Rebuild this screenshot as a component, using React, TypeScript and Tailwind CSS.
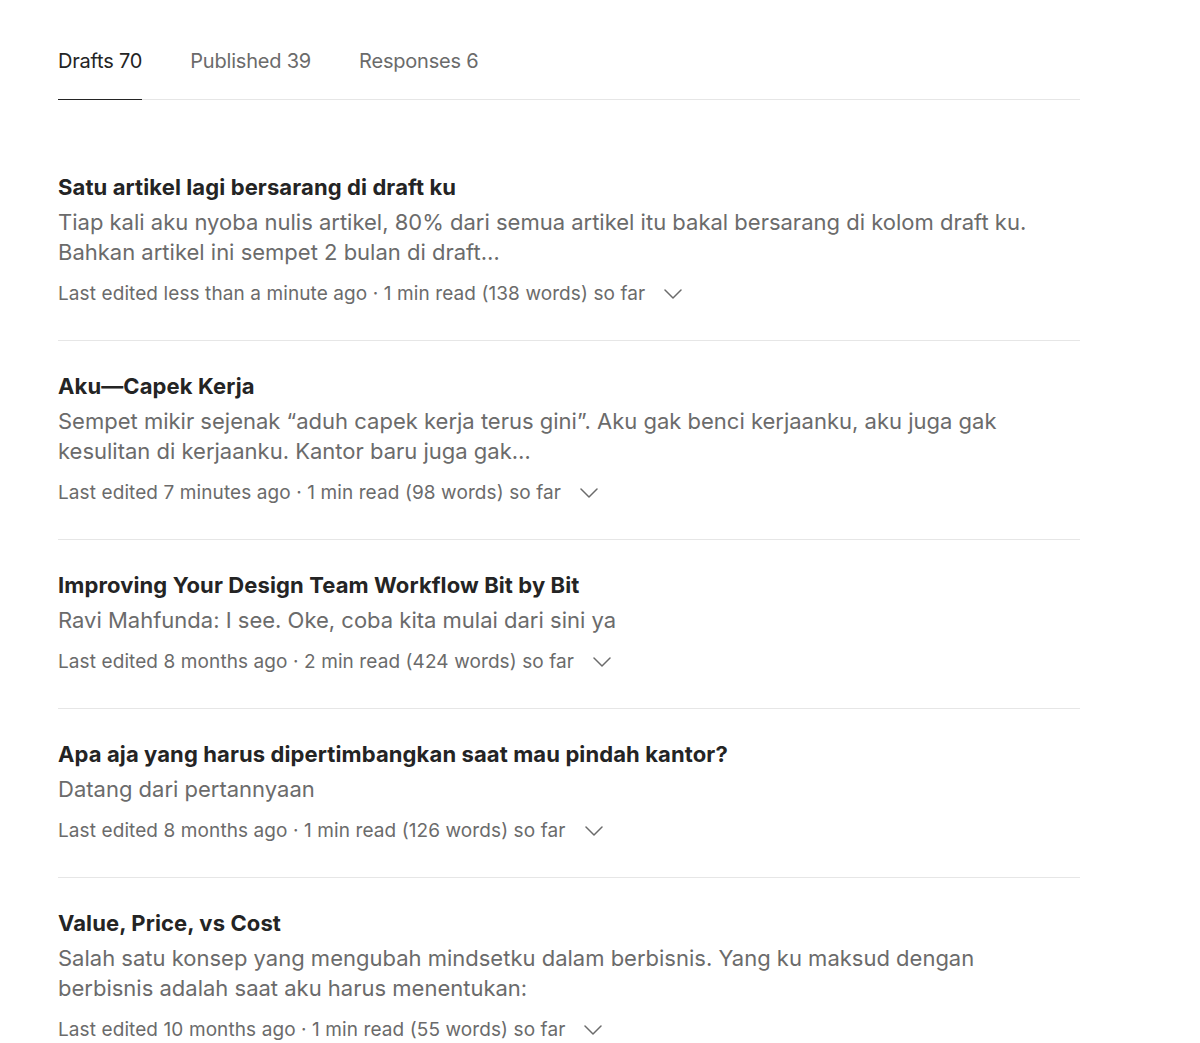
type Draft = {
  title: string;
  excerpt: string;
  edited: string;
  read: string;
};

const drafts: Draft[] = [
  {
    title: "Satu artikel lagi bersarang di draft ku",
    excerpt:
      "Tiap kali aku nyoba nulis artikel, 80% dari semua artikel itu bakal bersarang di kolom draft ku. Bahkan artikel ini sempet 2 bulan di draft…",
    edited: "less than a minute ago",
    read: "1 min read (138 words) so far",
  },
  {
    title: "Aku—Capek Kerja",
    excerpt:
      "Sempet mikir sejenak “aduh capek kerja terus gini”. Aku gak benci kerjaanku, aku juga gak kesulitan di kerjaanku. Kantor baru juga gak…",
    edited: "7 minutes ago",
    read: "1 min read (98 words) so far",
  },
  {
    title: "Improving Your Design Team Workflow Bit by Bit",
    excerpt: "Ravi Mahfunda: I see. Oke, coba kita mulai dari sini ya",
    edited: "8 months ago",
    read: "2 min read (424 words) so far",
  },
  {
    title: "Apa aja yang harus dipertimbangkan saat mau pindah kantor?",
    excerpt: "Datang dari pertannyaan",
    edited: "8 months ago",
    read: "1 min read (126 words) so far",
  },
  {
    title: "Value, Price, vs Cost",
    excerpt:
      "Salah satu konsep yang mengubah mindsetku dalam berbisnis. Yang ku maksud dengan berbisnis adalah saat aku harus menentukan:",
    edited: "10 months ago",
    read: "1 min read (55 words) so far",
  },
];

const tabs = [
  { label: "Drafts 70", active: true },
  { label: "Published 39", active: false },
  { label: "Responses 6", active: false },
];

function Chevron() {
  return (
    <svg width="18" height="10" viewBox="0 0 18 10" fill="none" className="ml-[19px] shrink-0">
      <path d="M1 1l8 8 8-8" stroke="#6b6b6b" strokeWidth="1.5" strokeLinecap="round" strokeLinejoin="round" />
    </svg>
  );
}

function DraftItem({ draft, first }: { draft: Draft; first: boolean }) {
  return (
    <article className={first ? "pt-[31px] pb-[34px]" : "border-t border-[#e6e6e6] pt-[31px] pb-[34px]"}>
      <h2 className="text-[22px] leading-[28px] font-bold tracking-[0.005em] text-[#242424]">
        {draft.title}
      </h2>
      <p className="mt-[6px] max-w-[990px] text-[22px] leading-[30px] text-[#6b6b6b]">{draft.excerpt}</p>
      <div className="mt-[15px] flex items-center text-[19px] leading-[24px] tracking-[0.005em] text-[#6b6b6b]">
        <span>
          Last edited {draft.edited} · {draft.read}
        </span>
        <Chevron />
      </div>
    </article>
  );
}

export default function App() {
  return (
    <div className="min-h-screen bg-white font-['Inter',sans-serif]">
      <div className="w-[1022px] ml-[58px]">
        <nav className="mt-[49px] flex gap-[48px] border-b border-[#e6e6e6]">
          {tabs.map((tab) => (
            <div
              key={tab.label}
              className={
                tab.active
                  ? "-mb-px border-b border-[#242424] pb-[26px] text-[20px] leading-[24px] tracking-[-0.01em] text-[#242424]"
                  : "pb-[26px] text-[20px] leading-[24px] tracking-[-0.01em] text-[#6b6b6b]"
              }
            >
              {tab.label}
            </div>
          ))}
        </nav>
        <div className="mt-[42px]">
          {drafts.map((d, i) => (
            <DraftItem key={d.title} draft={d} first={i === 0} />
          ))}
        </div>
      </div>
    </div>
  );
}
